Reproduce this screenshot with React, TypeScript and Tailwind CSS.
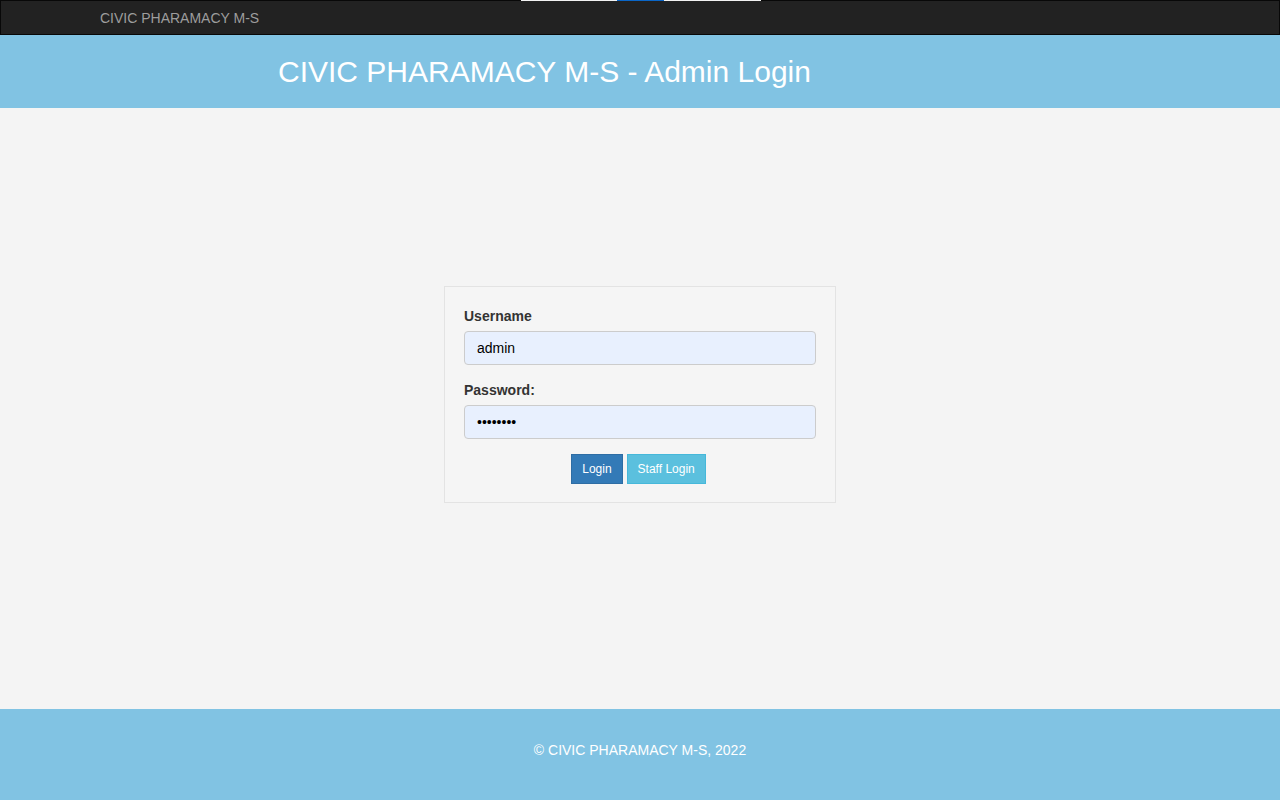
export default function App() {
    return (
        <div className="min-h-screen flex flex-col bg-[#f4f4f4] font-['Liberation_Sans',Arial,sans-serif]">
            {/* top navbar */}
            <nav className="relative h-[35px] bg-[#222222] border border-[#080808] flex items-center">
                <div className="absolute top-[-1px] left-[520px] w-[240px] h-px bg-[#f2f2f2]">
                    <div className="ml-[96px] w-[47px] h-px bg-[#0a66c8]" />
                </div>
                <a href="#" className="ml-[99px] text-[14px] leading-5 text-[#9d9d9d]">
                    CIVIC PHARAMACY M-S
                </a>
            </nav>

            {/* header band */}
            <header className="h-[73px] bg-[#81c3e3] flex items-center">
                <h1 className="ml-[278px] text-[30px] leading-none text-white">
                    CIVIC PHARAMACY M-S - Admin Login
                </h1>
            </header>

            {/* main */}
            <main className="flex-1 flex justify-center">
                <form
                    className="mt-[178px] self-start w-[392px] h-[217px] bg-[#f5f5f5] border border-[#e3e3e3] px-[19px] pt-[19px]"
                    onSubmit={(e) => e.preventDefault()}
                >
                    <div className="mb-[15px]">
                        <label className="block mb-[5px] text-[14px] leading-5 font-bold text-[#333333]">Username</label>
                        <input
                            type="text"
                            defaultValue="admin"
                            className="block w-full h-[34px] px-3 rounded-[4px] border border-[#cccccc] bg-[#e8f0fe] text-[14px] text-black outline-none"
                        />
                    </div>
                    <div className="mb-[15px]">
                        <label className="block mb-[5px] text-[14px] leading-5 font-bold text-[#333333]">Password:</label>
                        <input
                            type="password"
                            defaultValue="password"
                            className="block w-full h-[34px] px-3 rounded-[4px] border border-[#cccccc] bg-[#e8f0fe] text-[14px] text-black outline-none"
                        />
                    </div>
                    <div className="flex justify-center gap-1 pr-[3px]">
                        <button
                            type="submit"
                            className="h-[30px] px-[10px] bg-[#337ab7] border border-[#2e6da4] text-white text-[12px]"
                        >
                            Login
                        </button>
                        <button
                            type="button"
                            className="h-[30px] px-[10px] bg-[#5bc0de] border border-[#46b8da] text-white text-[12px]"
                        >
                            Staff Login
                        </button>
                    </div>
                </form>
            </main>

            {/* footer */}
            <footer className="h-[91px] bg-[#81c3e3] pt-[31px] text-center">
                <p className="text-[14px] leading-5 text-white">© CIVIC PHARAMACY M-S, 2022</p>
            </footer>
        </div>
    );
}
